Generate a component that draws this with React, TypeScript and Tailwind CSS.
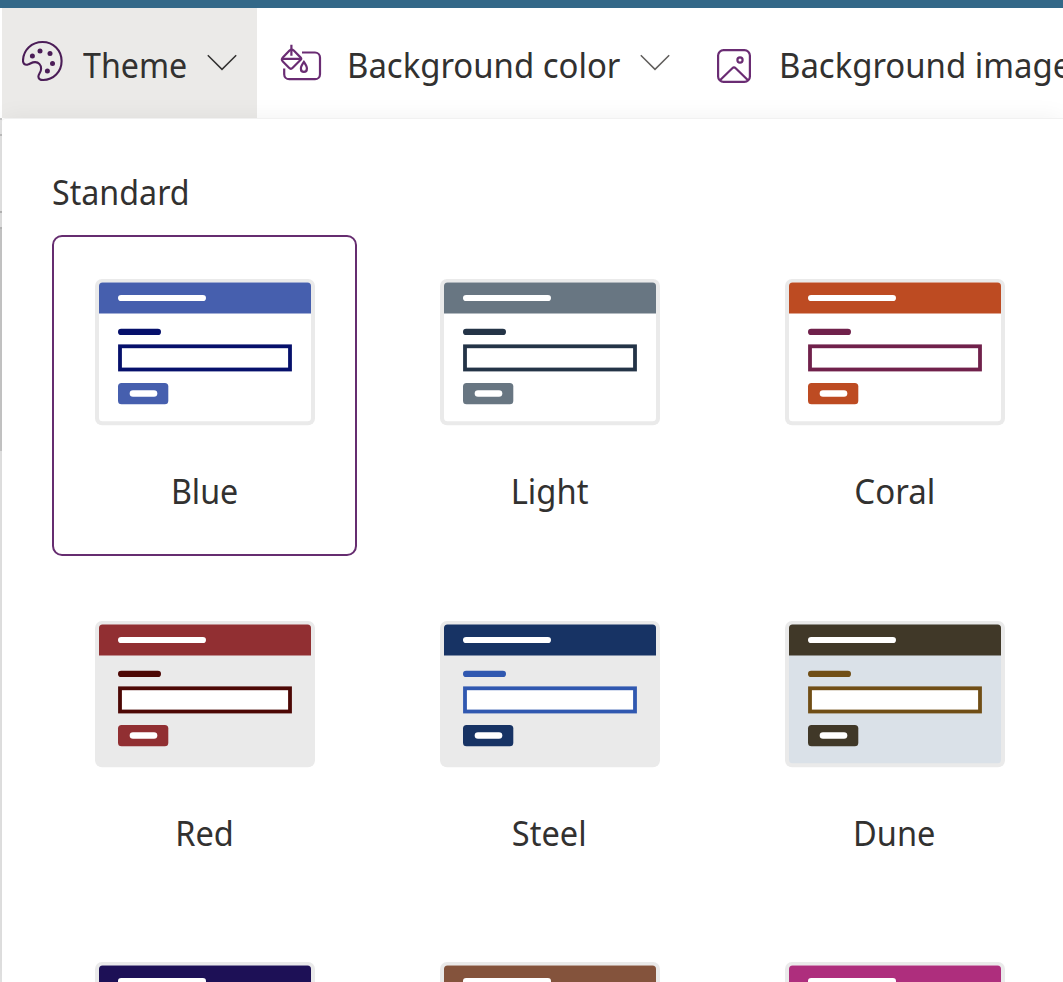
import type { ReactNode } from 'react';

type Theme = {
  name?: string;
  header: string;
  accent: string;
  body: string;
  stretch?: string;
  selected?: boolean;
};

const themes: Theme[] = [
  { name: 'Blue', header: '#465fae', accent: '#06106b', body: '#ffffff', stretch: 'scale-x-[0.92]', selected: true },
  { name: 'Light', header: '#687682', accent: '#243447', body: '#ffffff', stretch: 'scale-x-[0.935]' },
  { name: 'Coral', header: '#bd4b22', accent: '#70214b', body: '#ffffff', stretch: 'scale-x-[0.945]' },
  { name: 'Red', header: '#912f32', accent: '#4d0805', body: '#eaeaea', stretch: 'scale-x-[0.93]' },
  { name: 'Steel', header: '#173364', accent: '#3058b0', body: '#eaeaea', stretch: 'scale-x-[0.93]' },
  { name: 'Dune', header: '#403828', accent: '#704e16', body: '#dae1e8', stretch: 'scale-x-[0.93]' },
  { header: '#1d1056', accent: '#1d1056', body: '#ffffff' },
  { header: '#84533c', accent: '#84533c', body: '#ffffff' },
  { header: '#ae2e7d', accent: '#ae2e7d', body: '#ffffff' },
];

function Preview({ header, accent, body }: Theme) {
  return (
    <svg width="220" height="147" viewBox="0 0 220 147" className="block">
      <rect x="0" y="0" width="220" height="146.2" rx="7" fill="#eaeaea" />
      <rect x="4" y="3.6" width="212" height="138.7" rx="3.5" fill={body} />
      <path d="M4 34.5V7a3.5 3.5 0 0 1 3.5-3.5h205A3.5 3.5 0 0 1 216 7v27.5z" fill={header} />
      <rect x="23" y="15.9" width="88" height="6.2" rx="3.1" fill="#fff" />
      <rect x="23" y="49.8" width="43" height="6.2" rx="3.1" fill={accent} />
      <rect x="25" y="67.3" width="170" height="23.2" fill="#fff" stroke={accent} strokeWidth="3.8" />
      <rect x="23" y="104" width="50.3" height="21.2" rx="3.5" fill={header} />
      <rect x="34.7" y="111.2" width="27.6" height="6.6" rx="3.3" fill="#fff" />
    </svg>
  );
}

function Chevron({ color }: { color: string }) {
  return (
    <svg width="30" height="17" viewBox="0 0 30 17" fill="none" stroke={color} strokeWidth="1.5" className="shrink-0">
      <path d="M0.8 1.2 15 15.4 29.2 1.2" />
    </svg>
  );
}

function PaletteIcon() {
  return (
    <svg width="42" height="42" viewBox="22 40 42 42" fill="none" stroke="#4b1d57" strokeWidth="2.1" className="shrink-0">
      <path d="M27.6 64.6C24.6 65.2 22.9 63.4 23 60.6C23.3 49.8 31.8 42 42.5 42C53.3 42 61.6 50.2 61.6 61C61.6 71.8 53.4 80 43.1 80C40 80 38.3 78.7 38.4 76.3C38.6 73.7 41.2 72.2 41.1 68.5C41 64.9 38.5 62.2 35.2 62.1C31.8 62 30.2 64 27.6 64.6Z" />
      <g fill="#4b1d57" stroke="none">
        <circle cx="32.4" cy="56" r="2.5" />
        <circle cx="40" cy="51" r="2.5" />
        <circle cx="50" cy="53.4" r="2.5" />
        <circle cx="52.5" cy="63.4" r="2.5" />
        <circle cx="47.4" cy="71" r="2.5" />
      </g>
    </svg>
  );
}

function PaintIcon() {
  return (
    <svg width="42" height="38" viewBox="280 44 42 38" fill="none" stroke="#6a2c73" strokeWidth="2.2" className="shrink-0">
      <path d="M302 52.5h13a5 5 0 0 1 5 5v16.7a5 5 0 0 1-5 5h-25.8a5 5 0 0 1-5-5v-5.7" />
      <path d="M289.5 50.6 282.8 57.6c-1.2 1.3-1.2 2.7 0 3.9l6.2 6.3c1.1 1.1 2.6 1.1 3.7 0l8-8c.7-.8.7-1.5 0-2.2l-6.9-7c-1.4-1.2-2.9-1.2-4.3 0Z" />
      <path d="M282 58.9h19M291.4 44.8v11" />
      <path d="M303.9 61.9c-1.8 2.6-3 4.5-3 6.5 0 2.1 1.2 3.5 3 3.5s3-1.4 3-3.5c0-2-1.2-3.9-3-6.5Z" />
    </svg>
  );
}

function ImageIcon() {
  return (
    <svg width="36" height="36" viewBox="716 48 36 36" fill="none" stroke="#6a2c73" strokeWidth="2.2" className="shrink-0">
      <rect x="718.1" y="50.1" width="31.8" height="31.8" rx="5.5" />
      <circle cx="740" cy="60" r="2.6" />
      <path d="m720 80.3 12.3-12.1c1.1-1 2.3-1 3.4 0L748 80.3" />
    </svg>
  );
}

function Label({ className, children }: { className: string; children: ReactNode }) {
  return <span className={`whitespace-nowrap text-[35px] leading-[48px] ${className}`}>{children}</span>;
}

export default function App() {
  return (
    <div className="flex h-[982px] w-[1063px] flex-col overflow-hidden bg-white font-['Noto_Sans','Open_Sans',sans-serif] text-[#323130]">
      <div className="h-2 shrink-0 bg-[#336888]" />
      <div className="flex h-[110px] shrink-0 pl-[2px]">
        <button className="flex h-full w-[255px] shrink-0 items-start bg-[#ebeae8] pl-5 pt-[32px]">
          <PaletteIcon />
          <Label className="ml-[19px] mt-[1px] w-[106px] origin-left scale-x-[0.92] text-left">Theme</Label>
          <span className="ml-[18px] mt-[14px]"><Chevron color="#323130" /></span>
        </button>
        <button className="flex h-full w-[436px] shrink-0 items-start pl-[23px] pt-9">
          <PaintIcon />
          <Label className="ml-[25px] mt-[-3px] w-[273px] origin-left scale-x-[0.94] text-left">Background color</Label>
          <span className="ml-[20px] mt-[10px]"><Chevron color="#605e5c" /></span>
        </button>
        <button className="flex h-full shrink-0 items-start pl-[23px] pt-10">
          <ImageIcon />
          <Label className="ml-[27px] mt-[-7px] origin-left scale-x-[0.94]">Background image</Label>
        </button>
      </div>
      <div className="flex min-h-0 flex-1">
        <div className="flex w-[2px] shrink-0 flex-col bg-[#e3e3e3]">
          <div className="h-[2px] bg-[#c6c6c6]" />
          <div className="h-[14px]" />
          <div className="h-[2px] bg-[#bdbdbd]" />
          <div className="h-[75px]" />
          <div className="h-[2px] bg-[#b5b5b5]" />
          <div className="h-[14px] bg-[#e0e0e0]" />
          <div className="h-[2px] bg-[#b8b8b8]" />
          <div className="h-[222px] bg-[#c6c6c6]" />
        </div>
        <main className="relative flex-1 rounded-tl-[4px] border-t border-[#f1f1f1] bg-white pl-[50px] pt-[49px] shadow-[0_0_24px_rgba(0,0,0,0.06)]">
          <Label className="block origin-left scale-x-[0.92]">Standard</Label>
          <div className="mt-[19px] grid auto-rows-[321px] grid-cols-[repeat(3,305px)] gap-x-10 gap-y-[20.5px]">
            {themes.map((theme) => (
              <button
                key={theme.header}
                className={`flex flex-col items-center rounded-[10px] border-2 pt-[42px] ${theme.selected ? 'border-[#662d70]' : 'border-transparent'}`}
              >
                <Preview {...theme} />
                {theme.name && <Label className={`mt-[41px] ${theme.stretch}`}>{theme.name}</Label>}
              </button>
            ))}
          </div>
        </main>
      </div>
    </div>
  );
}
